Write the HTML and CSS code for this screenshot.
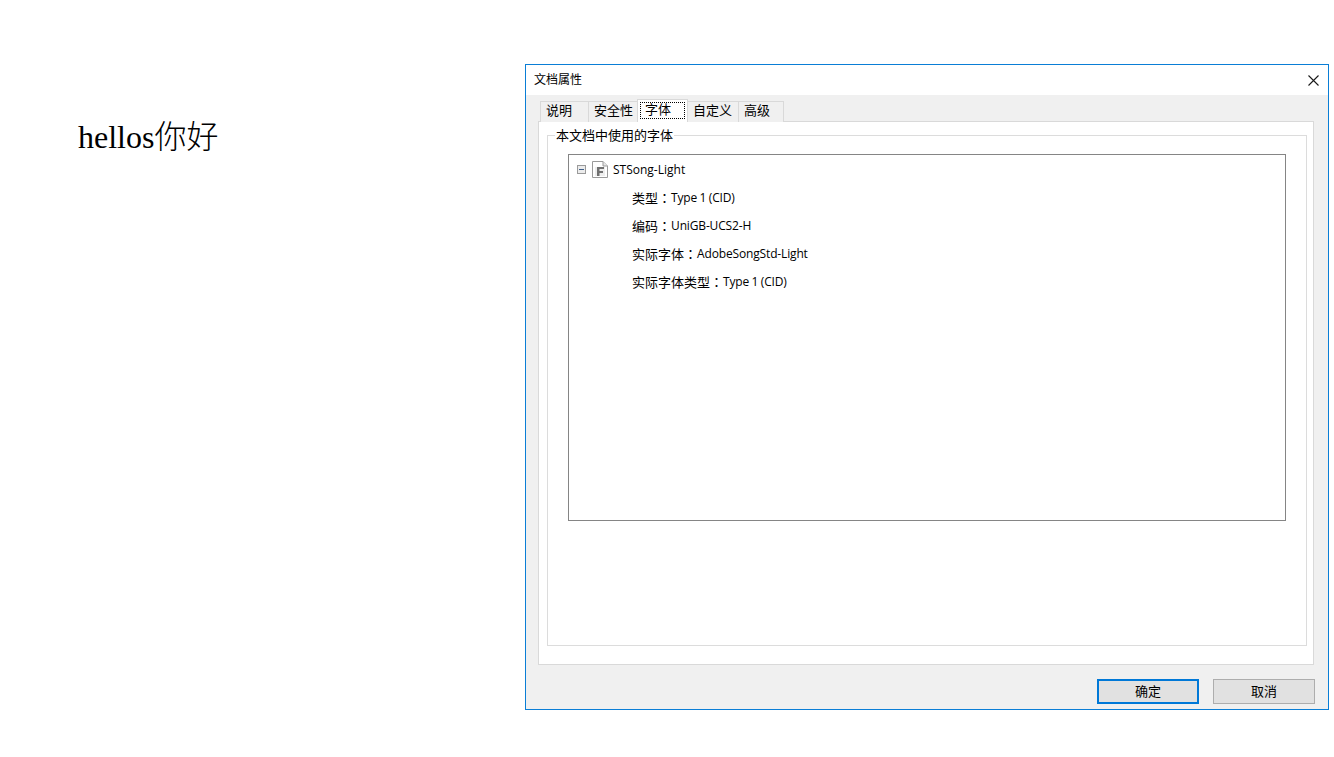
FILE: index.html
```
<!DOCTYPE html>
<html lang="zh-CN">
<head>
<meta charset="utf-8">
<title>文档属性</title>
<link rel="stylesheet" href="styles.css">
</head>
<body>
<main class="page">
  <p class="doc-text">hellos<span class="cjk">你好</span></p>
  <section class="dialog">
    <header class="titlebar">
      <span class="title">文档属性</span>
      <svg class="close" width="11" height="11" viewBox="0 0 11 11"><path d="M.5.5l10 10M10.500.5l-10 10" stroke="#1a1a1a" stroke-width="1.100" fill="none"/></svg>
    </header>
    <div class="body">
      <nav class="tabs">
        <span class="tab t1">说明</span>
        <span class="tab t2">安全性</span>
        <span class="tab active"><span class="focus">字体</span></span>
        <span class="tab t4">自定义</span>
        <span class="tab t5">高级</span>
      </nav>
      <div class="panel">
        <fieldset class="group">
          <legend class="legend">本文档中使用的字体</legend>
          <div class="tree">
            <div class="row root">
              <svg class="toggle" width="9" height="9" viewBox="0 0 9 9"><rect x=".5" y=".5" width="8" height="8" fill="#ececec" stroke="#9a9a9a"/><path d="M2 4.500h5" stroke="#3f5f8a"/></svg>
              <svg class="file" width="16" height="17" viewBox="0 0 16 17"><path d="M.5.500h10.500l4.500 4.500v11.500H.5z" fill="#fff" stroke="#9a9a9a"/><path d="M11 .5v4.500h4.500" fill="#e6e6e6" stroke="#9a9a9a"/><rect x="3" y="6" width="10" height="9" fill="#eeeeee"/><path d="M5 6h7v2H7.500v2H11v2H7.500v3H5z" fill="#707070"/></svg>
              <span>STSong-Light</span>
            </div>
            <div class="row leaf"><span class="zh">类型<span class="colon" lang="zh-TW">：</span></span><span class="val">Type 1 (CID)</span></div>
            <div class="row leaf"><span class="zh">编码<span class="colon" lang="zh-TW">：</span></span><span class="val">UniGB-UCS2-H</span></div>
            <div class="row leaf"><span class="zh">实际字体<span class="colon" lang="zh-TW">：</span></span><span class="val">AdobeSongStd-Light</span></div>
            <div class="row leaf"><span class="zh">实际字体类型<span class="colon" lang="zh-TW">：</span></span><span class="val">Type 1 (CID)</span></div>
          </div>
        </fieldset>
      </div>
      <footer class="actions">
        <button class="btn default">确定</button>
        <button class="btn">取消</button>
      </footer>
    </div>
  </section>
</main>
</body>
</html>
```
FILE: styles.css
```
* { box-sizing: border-box; }
html, body { margin: 0; height: 100%; background: #fff; }
body { font-family: "Open Sans", "Noto Sans CJK SC", sans-serif; color: #000; overflow: hidden; }
.page { display: flex; align-items: flex-start; height: 757px; padding: 64px 5px 0 78px; }
.doc-text {
  margin: 50px 0 0;
  width: 447px;
  flex: none;
  font-family: "Liberation Serif", "Noto Sans CJK SC", serif;
  font-size: 32px;
  line-height: 40px;
  color: #000;
  white-space: nowrap;
}
.cjk { font-family: "Noto Sans CJK SC", serif; font-weight: 300; }
.dialog {
  width: 804px;
  height: 646px;
  border: 1px solid #0a7ed6;
  display: flex;
  flex-direction: column;
  background: #f0f0f0;
}
.titlebar {
  flex: none;
  height: 30px;
  background: #fff;
  display: flex;
  align-items: center;
  justify-content: space-between;
  padding: 0 9px 0 8px;
}
.title { font-size: 12px; line-height: 30px; }
.body { flex: 1; display: flex; flex-direction: column; padding: 4px 14px 5px 12px; font-size: 13px; min-height: 0; }
.tabs { display: flex; align-items: flex-end; height: 23px; padding-left: 2px; position: relative; z-index: 1; margin-bottom: -1px; }
.tab {
  height: 21px;
  border: 1px solid #d9d9d9;
  border-bottom: 0;
  background: #f0f0f0;
  line-height: 16px;
  padding: 0 5px;
  margin-right: -1px;
  white-space: nowrap;
}
.t1 { width: 49px; }
.t2 { width: 51px; }
.t4 { width: 52px; }
.t5 { width: 46px; }
.tab.active {
  width: 51px;
  height: 23px;
  background: #fff;
  padding: 2px;
  margin: 0 -1px 0 -1px;
  position: relative;
}
.focus { display: block; height: 17px; border: 1px dotted #000; padding-left: 4px; line-height: 13px; }
.panel {
  height: 544px;
  background: #fff;
  border: 1px solid #d9d9d9;
  padding: 4px 6px 18px 8px;
}
.group {
  height: 100%;
  margin: 0;
  border: 1px solid #dcdcdc;
  padding: 10px 20px 0 20px;
  min-width: 0;
}
.legend { padding: 0 1px; margin-left: -13px; font-size: 13px; line-height: 18px; height: 18px; }
.tree {
  height: 367px;
  border: 1px solid #858585;
  background: #fff;
}
.row { height: 28px; display: flex; align-items: center; font-size: 12px; white-space: nowrap; }
.root { padding-left: 8px; }
.toggle { margin-right: 6px; margin-top: 1px; flex: none; }
.file { margin-right: 5px; flex: none; }
.leaf { padding-left: 63px; }
.zh { font-size: 13px; }
.colon { font-family: "Noto Sans CJK TC", sans-serif; }
.val { letter-spacing: -0.15px; word-spacing: -0.5px; }
.actions { margin-top: auto; display: flex; justify-content: flex-end; gap: 14px; margin-right: -1px; }
.btn {
  width: 102px;
  height: 25px;
  background: #e1e1e1;
  border: 1px solid #adadad;
  font: 13px "Open Sans", "Noto Sans CJK SC", sans-serif;
  color: #000;
  padding: 0 0 2px;
}
.btn.default { border: 2px solid #0078d7; }
```
